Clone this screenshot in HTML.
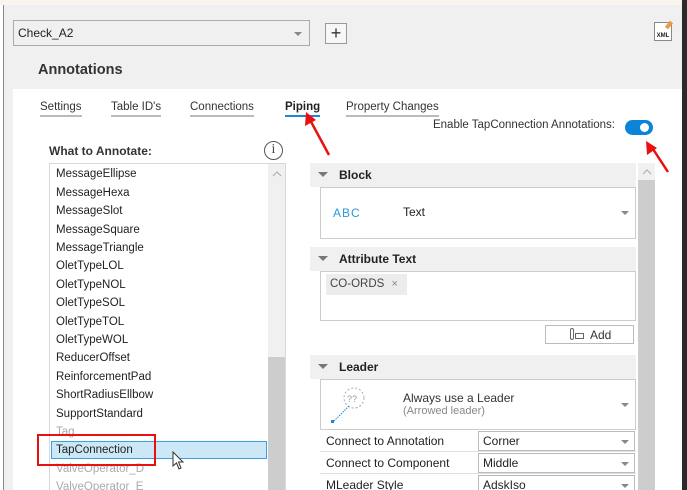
<!DOCTYPE html>
<html><head><style>
*{margin:0;padding:0;box-sizing:border-box}
html,body{width:687px;height:490px;overflow:hidden}
body{background:#f0f0f0;font-family:"Liberation Sans",sans-serif;font-size:12px;color:#222;position:relative}
.a{position:absolute}
.tab{position:absolute;top:101px;font-size:11.5px;color:#333;padding-bottom:2px;border-bottom:2px solid #bbb;white-space:nowrap}
.item{position:absolute;left:56px;font-size:11.5px;color:#222;margin-top:2px}
.hdr{position:absolute;left:310px;width:326px;height:24px;background:#f0f0f0;font-weight:bold;font-size:12px;line-height:24px;padding-left:29px}
.hdr:before{content:"";position:absolute;left:8px;top:9px;border:5px solid transparent;border-top:5px solid #777;border-bottom:0}
.box{position:absolute;left:320px;width:316px;background:#fff;border:1px solid #ccc}
.dd{position:absolute;border-left:4px solid transparent;border-right:4px solid transparent;border-top:4px solid #888}
.row{position:absolute;left:320px;width:316px;height:22px;border-bottom:1px solid #e0e0e0;font-size:12px}
.row span{position:absolute;left:6px;top:4px}
.row .sel{position:absolute;left:158px;top:1px;width:157px;height:20px;border:1px solid #bbb;background:#fff}
.row .sel span{left:4px;top:2px}
</style></head><body>
<div class="a" style="left:0;top:0;width:682px;height:5px;background:#fbf4ec"></div>
<div class="a" style="left:682px;top:0;width:5px;height:490px;background:#2b2b2b"></div>
<div class="a" style="left:0;top:5px;width:3px;height:485px;background:#fff"></div>
<div class="a" style="left:3px;top:5px;width:1px;height:485px;background:#888"></div>
<div class="a" style="left:13px;top:20px;width:297px;height:26px;background:#f0f0f0;border:1px solid #aaa"><span class="a" style="left:4px;top:5px;font-size:12px">Check_A2</span><div class="dd" style="left:280px;top:11px"></div></div>
<div class="a" style="left:325px;top:23px;width:22px;height:21px;border:1px solid #999;background:#f7f7f7;text-align:center;font-size:18px;line-height:18px;color:#333">+</div>
<div class="a" style="left:654px;top:22px;width:18px;height:19px;border:1px solid #888;background:#fff;font-size:6px;font-weight:bold;line-height:8px;text-align:center;padding-top:9px">XML</div>
<div class="a" style="left:667px;top:21px;width:4px;height:8px;background:#e94;transform:rotate(40deg)"></div>
<div class="a" style="left:38px;top:62px;font-size:14.5px;font-weight:bold;color:#333">Annotations</div>
<div class="a" style="left:13px;top:89px;width:669px;height:401px;background:#fff"></div>
<div class="tab" style="left:40px">Settings</div>
<div class="tab" style="left:111px">Table ID's</div>
<div class="tab" style="left:190px">Connections</div>
<div class="tab" style="left:285px;font-weight:bold;color:#222;border-bottom-color:#1a8ad4">Piping</div>
<div class="tab" style="left:346px">Property Changes</div>
<div class="a" style="left:400px;width:215px;text-align:right;top:119px;font-size:11.5px;color:#333;white-space:nowrap">Enable TapConnection Annotations:</div>
<div class="a" style="left:625px;top:120px;width:28px;height:15px;border-radius:8px;background:#0b84d8"><div class="a" style="left:15px;top:3px;width:9px;height:9px;border-radius:50%;background:#fff"></div></div>
<svg class="a" style="left:300px;top:110px" width="40" height="50"><line x1="9" y1="8" x2="29" y2="45" stroke="#e81010" stroke-width="2.5"/><polygon points="6,2 5,16 16,10" fill="#e81010"/></svg>
<svg class="a" style="left:640px;top:136px" width="40" height="40"><line x1="11" y1="10" x2="28" y2="36" stroke="#e81010" stroke-width="2.5"/><polygon points="6,5 7,19 17,12" fill="#e81010"/></svg>
<div class="a" style="left:49px;top:144px;font-weight:bold;font-size:12px;color:#333">What to Annotate:</div>
<div class="a" style="left:264px;top:141px;width:19px;height:19px;border:1.5px solid #555;border-radius:50%;text-align:center;font-family:'Liberation Serif',serif;font-size:14px;line-height:16px;color:#444">i</div>
<div class="a" style="left:49px;top:163px;width:237px;height:327px;border:1px solid #d8d8d8;border-bottom:0"></div>
<div class="a" style="left:268px;top:164px;width:17px;height:326px;background:#f0f0f0"></div>
<div class="a" style="left:268px;top:357px;width:17px;height:133px;background:#cdcdcd"></div>
<svg class="a" style="left:272px;top:170px" width="10" height="8"><path d="M1 6 L5 2 L9 6" fill="none" stroke="#aaa"/></svg>
<div class="item" style="top:166px">MessageEllipse</div>
<div class="item" style="top:185px">MessageHexa</div>
<div class="item" style="top:203px">MessageSlot</div>
<div class="item" style="top:222px">MessageSquare</div>
<div class="item" style="top:240px">MessageTriangle</div>
<div class="item" style="top:258px">OletTypeLOL</div>
<div class="item" style="top:277px">OletTypeNOL</div>
<div class="item" style="top:295px">OletTypeSOL</div>
<div class="item" style="top:314px">OletTypeTOL</div>
<div class="item" style="top:332px">OletTypeWOL</div>
<div class="item" style="top:350px">ReducerOffset</div>
<div class="item" style="top:369px">ReinforcementPad</div>
<div class="item" style="top:387px">ShortRadiusEllbow</div>
<div class="item" style="top:406px">SupportStandard</div>
<div class="item" style="top:424px;color:#aaa">Tag</div>
<div class="a" style="left:51px;top:441px;width:216px;height:18px;background:#cce8f6;border:1px solid #3d9fdc"></div>
<div class="item" style="top:442px">TapConnection</div>
<div class="item" style="top:461px;color:#aaa">ValveOperator_D</div>
<div class="item" style="top:479px;color:#aaa">ValveOperator_E</div>
<div class="a" style="left:37px;top:434px;width:119px;height:32px;border:2px solid #e81010"></div>
<svg class="a" style="left:172px;top:451px" width="14" height="20"><path d="M1 1 L1 15 L4.5 12 L7 18 L9 17 L6.5 11 L11 11 Z" fill="#fff" stroke="#333"/></svg>
<div class="a" style="left:638px;top:163px;width:17px;height:327px;background:#cdcdcd"></div>
<div class="a" style="left:638px;top:163px;width:17px;height:17px;background:#f0f0f0"></div>
<svg class="a" style="left:642px;top:168px" width="10" height="8"><path d="M1 6 L5 2 L9 6" fill="none" stroke="#aaa"/></svg>
<div class="hdr" style="top:163px">Block</div>
<div class="box" style="top:187px;height:52px"><span class="a" style="left:12px;top:18px;color:#2a9ad8;font-size:12px;letter-spacing:1px">ABC</span><span class="a" style="left:82px;top:17px;font-size:12px">Text</span><div class="dd" style="left:300px;top:23px"></div></div>
<div class="hdr" style="top:247px">Attribute Text</div>
<div class="box" style="top:271px;height:50px"><div class="a" style="left:5px;top:2px;width:81px;height:21px;background:#ececec;font-size:11.5px;padding:4px 4px;color:#444;white-space:nowrap">CO-ORDS <span style="color:#888;margin-left:4px;font-size:11px">×</span></div></div>
<div class="a" style="left:545px;top:325px;width:89px;height:19px;border:1px solid #bbb;background:#fff;font-size:12px;color:#333;padding:2px 0 0 44px">Add</div>
<div class="a" style="left:570px;top:328px;width:4px;height:12px;border:1px solid #666;border-radius:2px"></div>
<div class="a" style="left:575px;top:333px;width:9px;height:6px;border:1px solid #666"></div>
<div class="hdr" style="top:355px">Leader</div>
<div class="box" style="top:379px;height:51px"><svg class="a" style="left:8px;top:5px" width="40" height="40"><circle cx="25" cy="13" r="10" fill="none" stroke="#aaa" stroke-dasharray="2 2"/><text x="18" y="17" font-size="9" fill="#999" font-family="Liberation Sans">??</text><line x1="20" y1="21" x2="4" y2="37" stroke="#1a8ad4" stroke-dasharray="1.5 1"/><rect x="2" y="35" width="3" height="3" fill="#1a8ad4"/></svg><span class="a" style="left:82px;top:11px;font-size:12px;color:#333">Always use a Leader</span><span class="a" style="left:82px;top:25px;font-size:11px;color:#888">(Arrowed leader)</span><div class="dd" style="left:300px;top:23px"></div></div>
<div class="row" style="top:430px"><span>Connect to Annotation</span><div class="sel"><span>Corner</span><div class="dd" style="left:142px;top:8px"></div></div></div>
<div class="row" style="top:452px"><span>Connect to Component</span><div class="sel"><span>Middle</span><div class="dd" style="left:142px;top:8px"></div></div></div>
<div class="row" style="top:474px;height:16px;border:0"><span>MLeader Style</span><div class="sel" style="height:16px;border-bottom:0"><span>AdskIso</span><div class="dd" style="left:142px;top:8px"></div></div></div>
</body></html>
